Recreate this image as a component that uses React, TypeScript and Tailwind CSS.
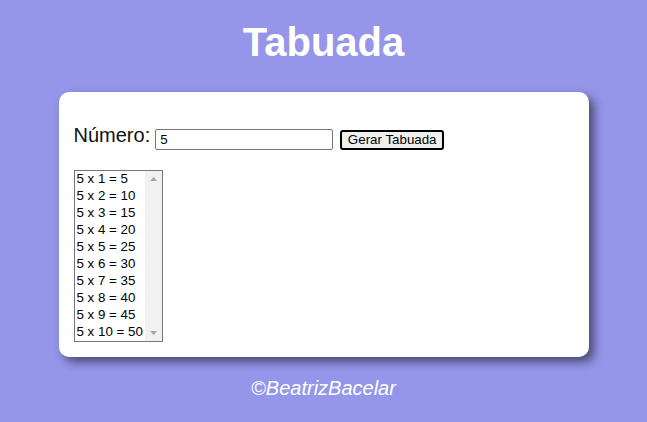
const items = [1, 2, 3, 4, 5, 6, 7, 8, 9, 10].map((i) => `5 x ${i} = ${5 * i}`);

function Arrow({ down }: { down?: boolean }) {
  return (
    <svg width="7" height="4" viewBox="0 0 7 4" className="block">
      <path d={down ? "M0 0 L7 0 L3.5 4 Z" : "M0 4 L7 4 L3.5 0 Z"} fill="#a3a3a3" />
    </svg>
  );
}

export default function App() {
  return (
    <div className="h-[422px] bg-[#9595e9] pt-[19px] font-['Liberation_Sans',Arial,sans-serif]">
      <h1 className="text-center text-[40px] leading-[46px] font-bold text-white">Tabuada</h1>

      <div className="mx-auto mt-[27px] w-[530px] rounded-[10px] bg-white px-[15px] pt-[32px] pb-[15px] shadow-[5px_5px_10px_rgba(0,0,0,0.5)]">
        <div className="flex items-start">
          <span className="text-[20px] leading-[23px] text-[#111]">Número:</span>
          <div className="ml-[5px] mt-[5px] flex h-[21px] w-[178px] items-center rounded-[2px] border border-[#767676] pl-[4px] text-[13.33px] text-black">
            5
          </div>
          <button className="ml-[7px] mt-[6px] h-[20px] w-[104px] rounded-[3px] border-2 border-black bg-[#efefef] text-[13.33px] leading-[16px] text-black">
            Gerar Tabuada
          </button>
        </div>

        <div className="mt-[20px] flex h-[172px] w-[89px] border border-[#767676] text-[13.33px] text-black">
          <ul className="flex-1">
            {items.map((t) => (
              <li key={t} className="h-[17px] whitespace-nowrap pl-[2px] leading-[15px]">
                {t}
              </li>
            ))}
          </ul>
          <div className="flex w-[17px] flex-col items-center justify-between bg-[#f1f1f1] py-[6px]">
            <Arrow />
            <Arrow down />
          </div>
        </div>
      </div>

      <p className="mt-[20px] text-center text-[20px] leading-[23px] italic text-white">©BeatrizBacelar</p>
    </div>
  );
}
